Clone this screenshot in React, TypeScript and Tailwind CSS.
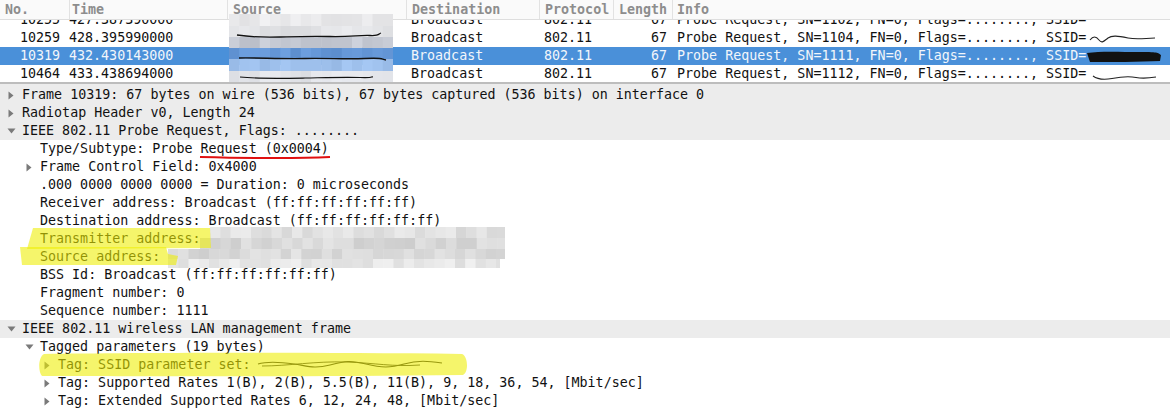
import React from "react";

const FONT = { fontFamily: '"DejaVu Sans Mono", "Liberation Mono", monospace' };

interface Packet {
  no: string;
  time: string;
  sn: string;
  selected?: boolean;
}

const packets: Packet[] = [
  { no: "10255", time: "427.387390000", sn: "1102" },
  { no: "10259", time: "428.395990000", sn: "1104" },
  { no: "10319", time: "432.430143000", sn: "1111", selected: true },
  { no: "10464", time: "433.438694000", sn: "1112" },
];

type Arrow = "right" | "down" | null;

interface TreeRow {
  level: number;
  arrow: Arrow;
  text: string;
  top?: boolean;
}

const tree: TreeRow[] = [
  { level: 0, arrow: "right", top: true, text: "Frame 10319: 67 bytes on wire (536 bits), 67 bytes captured (536 bits) on interface 0" },
  { level: 0, arrow: "right", top: true, text: "Radiotap Header v0, Length 24" },
  { level: 0, arrow: "down", top: true, text: "IEEE 802.11 Probe Request, Flags: ........" },
  { level: 1, arrow: null, text: "Type/Subtype: Probe Request (0x0004)" },
  { level: 1, arrow: "right", text: "Frame Control Field: 0x4000" },
  { level: 1, arrow: null, text: ".000 0000 0000 0000 = Duration: 0 microseconds" },
  { level: 1, arrow: null, text: "Receiver address: Broadcast (ff:ff:ff:ff:ff:ff)" },
  { level: 1, arrow: null, text: "Destination address: Broadcast (ff:ff:ff:ff:ff:ff)" },
  { level: 1, arrow: null, text: "Transmitter address:" },
  { level: 1, arrow: null, text: "Source address:" },
  { level: 1, arrow: null, text: "BSS Id: Broadcast (ff:ff:ff:ff:ff:ff)" },
  { level: 1, arrow: null, text: "Fragment number: 0" },
  { level: 1, arrow: null, text: "Sequence number: 1111" },
  { level: 0, arrow: "down", top: true, text: "IEEE 802.11 wireless LAN management frame" },
  { level: 1, arrow: "down", text: "Tagged parameters (19 bytes)" },
  { level: 2, arrow: "right", text: "Tag: SSID parameter set:" },
  { level: 2, arrow: "right", text: "Tag: Supported Rates 1(B), 2(B), 5.5(B), 11(B), 9, 18, 36, 54, [Mbit/sec]" },
  { level: 2, arrow: "right", text: "Tag: Extended Supported Rates 6, 12, 24, 48, [Mbit/sec]" },
];

function rand(i: number) {
  const x = Math.sin(i * 12.9898 + 78.233) * 43758.5453;
  return x - Math.floor(x);
}

function ArrowIcon({ dir }: { dir: Arrow }) {
  if (!dir) return null;
  return dir === "right" ? (
    <svg width="6" height="9" viewBox="0 0 6 9" className="ml-[2px]">
      <path d="M0.5 0.5 L5.5 4.5 L0.5 8.5 Z" fill="#7a7a7a" />
    </svg>
  ) : (
    <svg width="9" height="6" viewBox="0 0 9 6" className="ml-[1px]">
      <path d="M0.5 0.5 L8.5 0.5 L4.5 5.5 Z" fill="#7a7a7a" />
    </svg>
  );
}

// pixelated blur blocks over hidden addresses
interface Band {
  y: number;
  h: number;
  x0: number;
  x1: number;
  base: [number, number, number];
  v: number;
}

const sourceBands: Band[] = [
  { y: 14, h: 12, x0: 229, x1: 393, base: [234, 234, 236], v: 16 },
  { y: 26, h: 11, x0: 229, x1: 393, base: [226, 227, 230], v: 18 },
  { y: 37, h: 11, x0: 229, x1: 393, base: [196, 200, 210], v: 20 },
  { y: 48, h: 11, x0: 229, x1: 393, base: [100, 150, 214], v: 18 },
  { y: 59, h: 12, x0: 229, x1: 393, base: [158, 192, 236], v: 16 },
  { y: 71, h: 11, x0: 229, x1: 393, base: [226, 228, 233], v: 14 },
];

const addrBands: Band[] = [
  { y: 227, h: 11, x0: 210, x1: 505, base: [224, 224, 224], v: 24 },
  { y: 238, h: 11, x0: 200, x1: 505, base: [216, 216, 216], v: 24 },
  { y: 249, h: 10, x0: 168, x1: 505, base: [218, 218, 218], v: 24 },
  { y: 259, h: 9, x0: 168, x1: 500, base: [230, 230, 230], v: 20 },
];

function Mosaic({ bands, seed }: { bands: Band[]; seed: number }) {
  const cells: React.ReactNode[] = [];
  bands.forEach((b, bi) => {
    const w = 10.25;
    const n = Math.ceil((b.x1 - b.x0) / w);
    for (let i = 0; i < n; i++) {
      const r = rand(seed + bi * 97 + i * 7) - 0.5;
      const d = r * b.v;
      const c = b.base.map((ch) => Math.max(0, Math.min(255, Math.round(ch + d))));
      const x = b.x0 + i * w;
      cells.push(
        <rect
          key={`${bi}-${i}`}
          x={x}
          y={b.y}
          width={Math.min(w + 0.5, b.x1 - x)}
          height={b.h}
          fill={`rgb(${c[0]},${c[1]},${c[2]})`}
        />
      );
    }
  });
  return <>{cells}</>;
}

const HL = "rgba(238,238,0,0.58)";

export default function App() {
  return (
    <div className="relative w-[1170px] h-[420px] overflow-hidden bg-white text-[13.33px] text-[#111]" style={FONT}>
      {/* Packet list header */}
      <div className="flex h-[20px] bg-[#fafafa] border-b border-[#dedede] text-[#8d8d8d] font-bold leading-[20px]">
        <div className="w-[70px] pl-[5px] border-r border-[#e2e2e2]">No.</div>
        <div className="w-[158px] pl-[2px] border-r border-[#e2e2e2]">Time</div>
        <div className="w-[179px] pl-[5px] border-r border-[#e2e2e2]">Source</div>
        <div className="w-[133px] pl-[5px] border-r border-[#e2e2e2]">Destination</div>
        <div className="w-[74px] pl-[5px] border-r border-[#e2e2e2]">Protocol</div>
        <div className="w-[59px] pl-[5px] border-r border-[#e2e2e2]">Length</div>
        <div className="flex-1 pl-[4px]">Info</div>
      </div>

      {/* Packet rows, scrolled so the first one is cut by the header */}
      <div className="h-[62px] overflow-hidden">
        <div className="-mt-[9px]">
          {packets.map((p) => (
            <div
              key={p.no}
              className={`flex h-[18px] leading-[18px] whitespace-pre ${p.selected ? "bg-[#4a90d9] text-[#f2f6fb]" : "text-[#111]"}`}
            >
              <div className="w-[70px] pr-[10px] text-right">{p.no}</div>
              <div className="w-[158px] -ml-[1px]">{p.time}</div>
              <div className="w-[180px]" />
              <div className="w-[133px] pl-[4px]">Broadcast</div>
              <div className="w-[74px] pl-[4px]">802.11</div>
              <div className="w-[59px] pr-[6px] text-right">67</div>
              <div className="flex-1 pl-[4px]">{`Probe Request, SN=${p.sn}, FN=0, Flags=........, SSID=`}</div>
            </div>
          ))}
        </div>
      </div>

      {/* Splitter */}
      <div className="h-[4px] border-t-2 border-[#bdbdbd] bg-[#ececec]" />

      {/* Packet details tree */}
      <div>
        {tree.map((r, i) => (
          <div
            key={i}
            className={`flex items-center h-[18px] leading-[18px] whitespace-pre ${r.top ? "bg-[#ececec]" : ""}`}
            style={{ paddingLeft: 6 + r.level * 18 }}
          >
            <div className="w-[16px] flex items-center">
              <ArrowIcon dir={r.arrow} />
            </div>
            <span>{r.text}</span>
          </div>
        ))}
      </div>

      {/* Redactions and highlighter marks */}
      <svg className="absolute left-0 top-0 pointer-events-none" width="1170" height="420" viewBox="0 0 1170 420">
        <Mosaic bands={sourceBands} seed={3} />
        <Mosaic bands={addrBands} seed={41} />

        {/* source column scribbles */}
        <path d="M237 35 C250 37 262 37.5 280 37 S310 36 330 36.5 S360 35 370 35.5 S378 34 381 33" stroke="#111" strokeWidth="1.3" fill="none" />
        <path d="M239 58 C255 57.5 280 59 305 58.5 S345 59.5 365 58.5 S380 59 386 60" stroke="#111" strokeWidth="1.4" fill="none" />
        <path d="M240 77 C258 79 280 78.5 305 78 S345 77 360 77.5 S370 76.5 373 77" stroke="#111" strokeWidth="1.2" fill="none" />

        {/* SSID scribbles */}
        <path d="M1090 40 C1093 36 1096 36 1099 40 S1104 41 1108 38 S1118 36 1128 38 S1146 38 1155 38" stroke="#222" strokeWidth="1.1" fill="none" />
        <path
          d="M1087 53 C1100 51 1120 52 1140 52 S1158 53 1161 55 L1160 61 C1140 62 1110 62 1090 62 Z"
          fill="#111"
        />
        <path d="M1093 76 C1097 79 1104 80 1112 78.5 S1128 76 1136 77.5 S1150 78 1156 77" stroke="#222" strokeWidth="1.1" fill="none" />

        {/* red underline */}
        <path d="M200 157 C240 158 300 158.5 330 157" stroke="#e01010" strokeWidth="2" fill="none" />

        {/* SSID tag scribble */}
        <path
          d="M258 364 C268 361 280 362 294 364 S314 369 330 365 S350 360 366 364 S390 368 404 364 S428 361 442 363"
          stroke="#222"
          strokeWidth="1.1"
          fill="none"
        />
        <path d="M262 366 C288 366 316 361 346 362 S392 367 420 365" stroke="#222" strokeWidth="0.9" fill="none" />

        {/* highlighter */}
        <path d="M33 228 L210 228 L211 248 L27 249 Z" fill={HL} />
        <path d="M20 247 L166 247 L168 254 L178 256 L176 265 L22 265 Z" fill={HL} />
        <path d="M44 354 C120 353 300 352 462 354 C468 356 469 372 463 375 C300 377 120 376 42 376 C38 372 38 357 44 354 Z" fill={HL} />
      </svg>
    </div>
  );
}
